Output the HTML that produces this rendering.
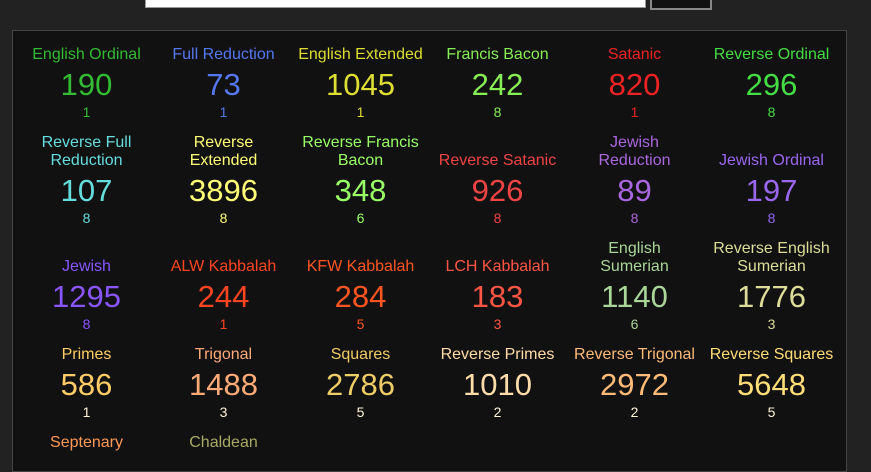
<!DOCTYPE html>
<html><head><style>
body{margin:0;width:871px;height:458px;background:#222;overflow:hidden;font-family:"Liberation Sans",Arial,sans-serif;position:relative}
.inp{position:absolute;left:145px;top:-2px;width:499px;height:8px;background:#fff;border:1px solid #999}
.btn{position:absolute;left:650px;top:-2px;width:58px;height:8px;background:#111;border:2px solid #888}
.panel{position:absolute;left:12px;top:30px;width:833px;height:440px;background:#111;border:1px solid #444}
.row{position:absolute;left:0;height:0;width:871px}
.c{position:absolute;width:137px;top:0;height:0;text-align:center}
.l{position:absolute;bottom:0;left:-10px;right:-10px;font-size:16px;line-height:18px}
.n{position:absolute;top:4px;left:0;right:0;font-size:31px;line-height:34px}
.s{position:absolute;top:40px;left:0;right:0;font-size:14px;line-height:16px}
.w{color:#fff3d8}
</style></head><body>
<div class="inp"></div><div class="btn"></div>
<div class="panel"></div>

<div class="row" style="top:64px">
<div class="c" style="left:18px;color:#33bb33"><div class="l">English Ordinal</div><div class="n">190</div><div class="s">1</div></div>
<div class="c" style="left:155px;color:#5577ee"><div class="l">Full Reduction</div><div class="n">73</div><div class="s">1</div></div>
<div class="c" style="left:292px;color:#dddd33"><div class="l">English Extended</div><div class="n">1045</div><div class="s">1</div></div>
<div class="c" style="left:429px;color:#88ee55"><div class="l">Francis Bacon</div><div class="n">242</div><div class="s">8</div></div>
<div class="c" style="left:566px;color:#ee2222"><div class="l">Satanic</div><div class="n">820</div><div class="s">1</div></div>
<div class="c" style="left:703px;color:#44dd44"><div class="l">Reverse Ordinal</div><div class="n">296</div><div class="s">8</div></div>
</div>

<div class="row" style="top:170px">
<div class="c" style="left:18px;color:#66dddd"><div class="l">Reverse Full<br>Reduction</div><div class="n">107</div><div class="s">8</div></div>
<div class="c" style="left:155px;color:#ffff77"><div class="l">Reverse<br>Extended</div><div class="n">3896</div><div class="s">8</div></div>
<div class="c" style="left:292px;color:#99ff66"><div class="l">Reverse Francis<br>Bacon</div><div class="n">348</div><div class="s">6</div></div>
<div class="c" style="left:429px;color:#ee4444"><div class="l">Reverse Satanic</div><div class="n">926</div><div class="s">8</div></div>
<div class="c" style="left:566px;color:#aa66dd"><div class="l">Jewish<br>Reduction</div><div class="n">89</div><div class="s">8</div></div>
<div class="c" style="left:703px;color:#9966ee"><div class="l">Jewish Ordinal</div><div class="n">197</div><div class="s">8</div></div>
</div>

<div class="row" style="top:276px">
<div class="c" style="left:18px;color:#8855ff"><div class="l">Jewish</div><div class="n">1295</div><div class="s">8</div></div>
<div class="c" style="left:155px;color:#ff4422"><div class="l">ALW Kabbalah</div><div class="n">244</div><div class="s">1</div></div>
<div class="c" style="left:292px;color:#ff5522"><div class="l">KFW Kabbalah</div><div class="n">284</div><div class="s">5</div></div>
<div class="c" style="left:429px;color:#ff5544"><div class="l">LCH Kabbalah</div><div class="n">183</div><div class="s">3</div></div>
<div class="c" style="left:566px;color:#aad599"><div class="l">English<br>Sumerian</div><div class="n">1140</div><div class="s">6</div></div>
<div class="c" style="left:703px;color:#dddd99"><div class="l">Reverse English<br>Sumerian</div><div class="n">1776</div><div class="s">3</div></div>
</div>

<div class="row" style="top:364px">
<div class="c" style="left:18px;color:#ffcc66"><div class="l">Primes</div><div class="n">586</div><div class="s w">1</div></div>
<div class="c" style="left:155px;color:#ffaa77"><div class="l">Trigonal</div><div class="n">1488</div><div class="s w">3</div></div>
<div class="c" style="left:292px;color:#eecc66"><div class="l">Squares</div><div class="n">2786</div><div class="s w">5</div></div>
<div class="c" style="left:429px;color:#ffddaa"><div class="l">Reverse Primes</div><div class="n">1010</div><div class="s w">2</div></div>
<div class="c" style="left:566px;color:#ffbb77"><div class="l">Reverse Trigonal</div><div class="n">2972</div><div class="s w">2</div></div>
<div class="c" style="left:703px;color:#ffdd77"><div class="l">Reverse Squares</div><div class="n">5648</div><div class="s w">5</div></div>
</div>

<div class="row" style="top:452px">
<div class="c" style="left:18px;color:#ff9955"><div class="l">Septenary</div></div>
<div class="c" style="left:155px;color:#aaaa66"><div class="l">Chaldean</div></div>
</div>
</body></html>
